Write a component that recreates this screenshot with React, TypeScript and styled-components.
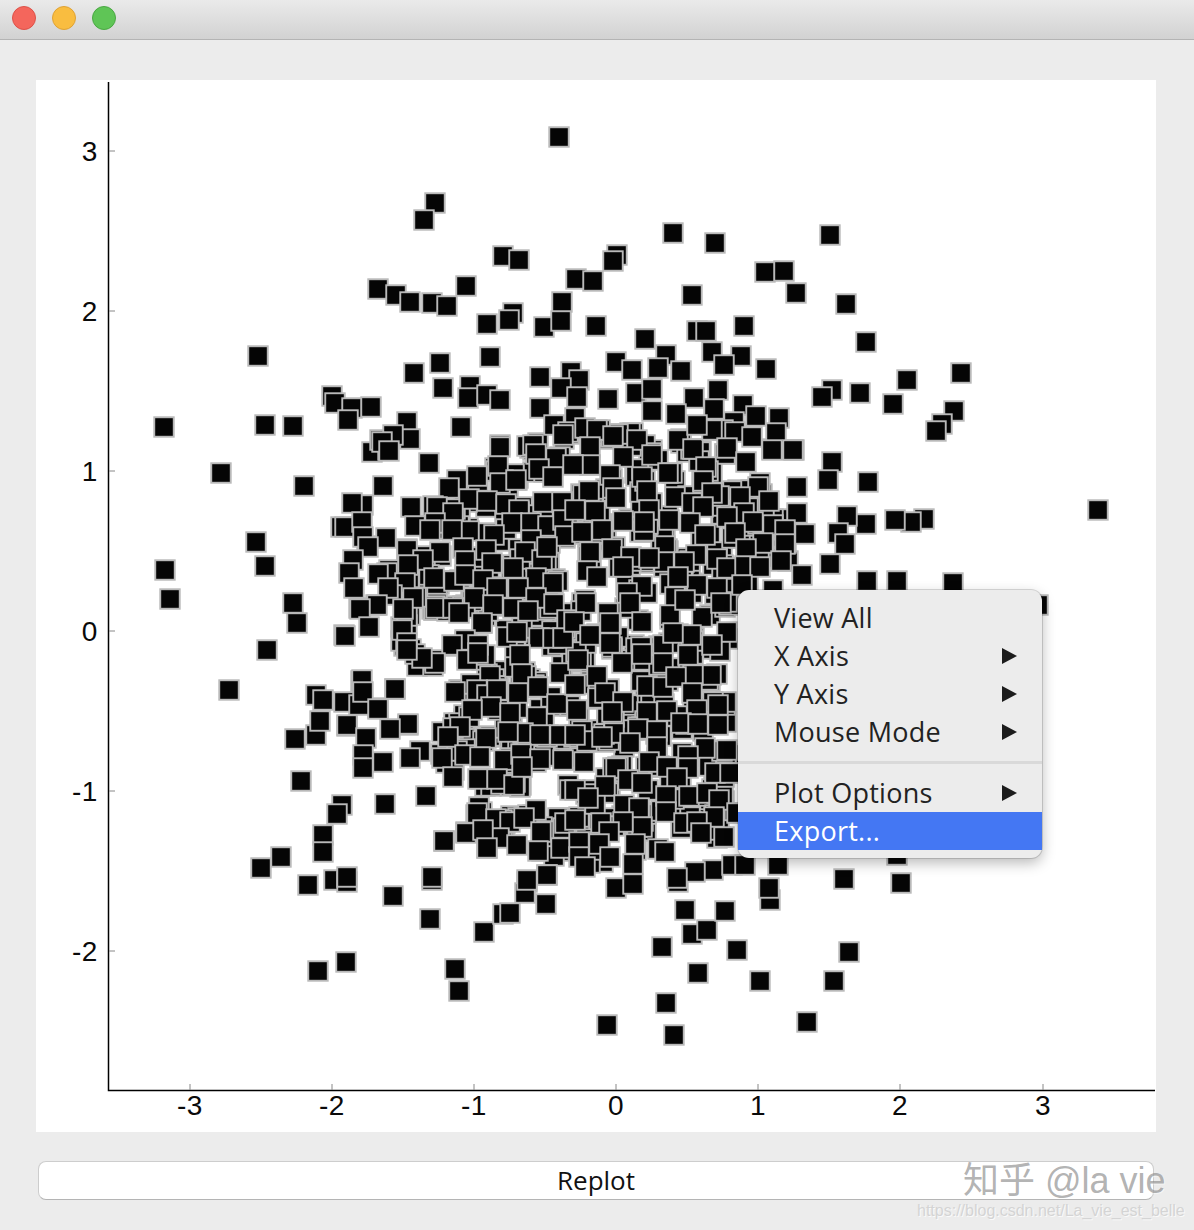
import React from "react";
import styled, { createGlobalStyle } from "styled-components";

const Global = createGlobalStyle`
  html, body { margin: 0; padding: 0; background: #ececec; }
  body { font-family: "Liberation Sans", Arial, sans-serif; }
`;

const Win = styled.div`
  position: relative;
  width: 1194px;
  height: 1230px;
  overflow: hidden;
  background: #ececec;
  display: flex;
  flex-direction: column;
`;
const TitleBar = styled.div`
  box-sizing: border-box;
  height: 40px;
  flex: none;
  display: flex;
  align-items: flex-start;
  gap: 16px;
  padding: 6px 0 0 12px;
  background: linear-gradient(#eaeaea, #d2d2d2);
  border-bottom: 1px solid #b4b4b4;
`;
const Light = styled.span<{ $fill: string; $edge: string }>`
  box-sizing: border-box;
  width: 24px;
  height: 24px;
  border-radius: 50%;
  background: ${(p) => p.$fill};
  border: 1px solid ${(p) => p.$edge};
`;
const Body = styled.div`
  flex: 1;
  display: flex;
  flex-direction: column;
  padding: 40px 38px 30px 36px;
`;
const PlotPanel = styled.div`
  position: relative;
  width: 1120px;
  height: 1052px;
  background: #fff;
`;
const PlotSvg = styled.svg`
  display: block;
  width: 1120px;
  height: 1052px;
`;
const AxisLabel = styled.text`
  font-family: "Liberation Sans", Arial, sans-serif;
  font-size: 28px;
  letter-spacing: 0.6px;
  fill: #0a0a0a;
`;
const Menu = styled.div`
  position: absolute;
  left: 702px;
  top: 510px;
  box-sizing: border-box;
  width: 304px;
  height: 268px;
  padding: 9px 0 8px;
  background: #ececec;
  border-radius: 11px;
  box-shadow: 0 0 0 1px rgba(0, 0, 0, 0.14), 0 5px 14px rgba(0, 0, 0, 0.28);
  font-family: "Open Sans", "Noto Sans", sans-serif;
`;
const MenuRow = styled.div<{ $active?: boolean }>`
  box-sizing: border-box;
  height: 38px;
  padding: 0 25px 0 36px;
  display: flex;
  align-items: center;
  justify-content: space-between;
  font-size: 27px;
  line-height: 36px;
  letter-spacing: 0.25px;
  color: ${(p) => (p.$active ? "#fff" : "#222")};
  background: ${(p) => (p.$active ? "#4477f3" : "transparent")};
`;
const MenuLabel = styled.span`
  margin-top: -1px;
`;
const Arrow = styled.span`
  width: 0;
  height: 0;
  border-left: 15px solid #1c1c1c;
  border-top: 8px solid transparent;
  border-bottom: 8px solid transparent;
`;
const Separator = styled.div`
  height: 3px;
  margin: 10px 0;
  background: #d9d9d9;
`;
const ReplotButton = styled.button`
  box-sizing: border-box;
  margin: 29px 0 0 2px;
  width: 1116px;
  height: 39px;
  flex: none;
  background: #fff;
  border: 1px solid #cdcdcd;
  border-bottom-color: #b4b4b4;
  border-radius: 8px;
  font-family: "Open Sans", "Noto Sans", sans-serif;
  font-size: 26px;
  line-height: 34px;
  color: #111;
  padding: 0 0 2px;
`;
const ZhihuMark = styled.div`
  position: absolute;
  left: 963px;
  top: 1160px;
  font-family: "Liberation Sans", "Noto Sans CJK SC", sans-serif;
  font-size: 36px;
  line-height: 42px;
  white-space: nowrap;
  color: rgba(130, 130, 130, 0.62);
  text-shadow: 1px 1px 0 rgba(255, 255, 255, 0.5);
`;
const CsdnMark = styled.div`
  position: absolute;
  left: 917px;
  top: 1201px;
  font-family: "Liberation Sans", sans-serif;
  font-size: 16px;
  line-height: 20px;
  white-space: nowrap;
  color: #d4d4d4;
  text-shadow: 1px 1px 0 #fafafa;
`;

const outer: [number, number][] = [
  [559,137],[435,203],[424,220],[673,233],[715,243],[830,235],[503,256],[519,260],[617,255],[613,261],[576,279],[593,281],[765,272],[784,271],[796,293],[378,289],[396,295],[410,302],[432,303],[447,306],[466,286],[562,302],[513,313],[692,295],[846,304],[487,324],[509,320],[544,327],[561,321],[596,326],[697,331],[706,331],[744,326],[645,339],[866,342],[258,356],[440,363],[490,357],[414,373],[666,355],[712,352],[741,356],[724,365],[766,369],[961,373],[907,380],[332,396],[335,403],[352,408],[371,407],[407,422],[443,388],[470,386],[468,398],[487,395],[500,400],[540,377],[540,408],[608,399],[616,362],[632,370],[658,368],[681,371],[718,390],[694,398],[860,393],[893,404],[832,390],[822,397],[954,411],[942,424],[936,431],[164,427],[265,425],[293,426],[348,420],[461,427],[221,473],[429,463],[304,486],[383,486],[372,452],[388,450],[380,440],[832,462],[868,482],[828,480],[794,450],[772,449],[779,418],[1098,510],[924,519],[911,522],[895,520],[866,524],[847,516],[838,533],[845,544],[805,534],[256,542],[265,566],[165,570],[170,599],[341,527],[363,505],[352,503],[293,603],[297,623],[267,650],[229,690],[344,635],[361,681],[395,689],[316,695],[323,700],[295,739],[316,735],[320,721],[347,726],[378,708],[408,725],[301,781],[342,805],[337,814],[385,804],[426,796],[323,835],[323,852],[281,857],[261,868],[308,885],[334,880],[347,882],[393,896],[432,880],[430,919],[484,932],[503,914],[510,913],[527,882],[525,893],[546,904],[547,875],[455,969],[459,991],[346,962],[318,971],[607,1025],[666,1003],[674,1035],[698,973],[662,947],[692,934],[707,930],[725,911],[685,910],[678,882],[737,950],[760,981],[807,1022],[834,981],[849,952],[770,900],[769,888],[844,879],[901,883],[778,865],[616,888],[633,884],[466,832],[444,841],[487,848],[867,581],[897,581],[953,583],[830,564],[1038,605],[802,575],[897,855],
  [571,372],[579,380],[561,388],[577,397],[636,393],[652,389],[652,411],[676,414],[714,409],[743,405],[756,416],[734,422],[723,430],[575,418],[611,437],[600,430],[527,446],[500,445],[554,425],[568,432],[585,428],[376,605],[359,608],[389,570],[407,549],[367,546]
];

const dense: [number, number][] = [
  [410,439],[393,435],[382,442],[389,451],[500,447],[533,445],[536,454],[556,458],[563,435],[498,466],[477,476],[457,480],[539,469],[553,477],[500,483],[516,480],[449,488],[469,499],[487,501],[543,502],[562,502],[411,507],[433,506],[437,507],[506,504],[519,510],[453,513],[435,523],[512,523],[531,523],[548,526],[563,520],[469,531],[494,535],[531,540],[345,527],[362,522],[415,526],[430,530],[452,530],[565,536],[363,537],[386,538],[368,547],[407,550],[440,552],[423,560],[463,548],[486,550],[525,552],[542,560],[547,547],[465,561],[353,560],[408,565],[492,563],[513,568],[536,578],[553,583],[349,573],[387,573],[378,574],[454,581],[434,578],[465,575],[483,580],[354,588],[405,583],[497,588],[518,588],[474,598],[536,598],[413,598],[392,595],[388,588],[493,605],[554,604],[377,605],[360,609],[403,609],[436,608],[453,608],[459,613],[513,608],[528,611],[482,623],[507,637],[517,632],[539,638],[553,638],[567,620],[369,627],[402,630],[345,636],[407,643],[465,640],[452,645],[478,645],[563,638],
  [597,430],[613,436],[637,440],[652,455],[623,457],[678,440],[693,449],[712,430],[697,425],[735,432],[752,437],[776,433],[727,448],[746,462],[772,450],[793,450],[706,467],[590,447],[590,465],[573,465],[610,475],[668,473],[642,477],[703,481],[758,487],[797,487],[589,491],[613,488],[647,491],[712,493],[675,497],[692,503],[740,497],[769,501],[616,498],[703,507],[595,511],[744,513],[575,510],[649,510],[623,521],[644,531],[644,522],[669,520],[690,523],[773,525],[727,517],[797,513],[753,522],[705,535],[602,530],[582,532],[735,533],[785,530],[763,543],[612,549],[665,546],[590,552],[746,549],[785,544],[631,557],[696,555],[684,562],[717,559],[781,561],[727,568],[664,562],[649,558],[587,571],[623,567],[597,577],[745,566],[760,567],[697,585],[742,585],[717,588],[642,586],[678,577],[675,597],[773,590],[586,603],[627,593],[630,603],[608,613],[642,622],[670,615],[702,617],[721,603],[685,600],[574,622],[727,632],[590,635],[610,623],[610,643],[691,635],[663,645],[641,647],[712,645],[673,633],
  [435,663],[422,658],[407,650],[467,660],[478,653],[520,655],[362,680],[395,689],[490,676],[455,692],[522,674],[560,673],[477,690],[487,695],[497,690],[538,687],[518,693],[557,704],[491,707],[472,710],[510,713],[537,717],[344,702],[359,705],[363,692],[378,709],[408,724],[390,729],[347,725],[460,727],[448,737],[523,733],[486,738],[508,732],[540,735],[560,735],[366,738],[420,751],[363,755],[383,762],[442,758],[465,755],[410,758],[480,757],[504,760],[521,754],[540,759],[563,760],[363,768],[453,777],[478,779],[497,779],[514,785],[522,767],[570,790],[477,813],[496,819],[536,810],[510,822],[524,818],[541,832],[466,833],[444,841],[499,838],[483,830],[517,845],[487,848],[538,851],[561,848],[565,823],[547,875],[527,880],[432,877],[347,877],
  [578,660],[622,663],[597,676],[575,685],[663,663],[642,654],[688,655],[711,675],[693,675],[647,686],[605,693],[663,687],[676,677],[692,693],[718,705],[623,702],[612,712],[577,710],[667,711],[697,710],[647,712],[681,723],[638,729],[718,725],[657,731],[698,724],[587,741],[614,733],[602,737],[657,747],[705,748],[630,743],[688,756],[727,750],[575,735],[584,762],[649,762],[667,767],[616,768],[688,768],[715,773],[730,773],[628,780],[605,786],[575,790],[642,783],[677,778],[666,796],[689,796],[707,793],[719,800],[588,798],[624,805],[639,808],[666,812],[575,820],[601,823],[684,823],[714,817],[697,822],[737,813],[642,827],[623,822],[609,832],[724,837],[701,833],[579,842],[599,844],[610,857],[635,844],[579,857],[633,864],[585,867],[665,852],[713,870],[695,872],[732,865],[745,865],[677,878]
];

function makeUnderLayer(): [number, number][] {
  let seed = 8123;
  const rnd = () => {
    seed = (seed * 1664525 + 1013904223) >>> 0;
    return seed / 4294967296;
  };
  const res: [number, number][] = [];
  for (let i = 0; i < 20000 && res.length < 620; i++) {
    const x = 350 + rnd() * 450;
    const y = 430 + rnd() * 440;
    const dx = (x - 615) / 215;
    const dy = (y - 645) / 225;
    const near = dense.some(([qx, qy]) => Math.abs(qx - x) <= 8 && Math.abs(qy - y) <= 8);
    const centre = dx * dx + dy * dy < 1 && x > 395;
    if (near && centre) res.push([Math.round(x), Math.round(y)]);
  }
  return res;
}

const points = [...makeUnderLayer(), ...outer, ...dense];
const xTicks: [number, string][] = [[190,"-3"],[332,"-2"],[474,"-1"],[616,"0"],[758,"1"],[900,"2"],[1043,"3"]];
const yTicks: [number, string][] = [[151,"3"],[311,"2"],[471,"1"],[631,"0"],[791,"-1"],[951,"-2"]];

export default function App() {
  return (
    <Win>
      <Global />
      <TitleBar>
        <Light $fill="#f4665c" $edge="#dd5148" />
        <Light $fill="#f9bd40" $edge="#dfa235" />
        <Light $fill="#5fc556" $edge="#4aa843" />
      </TitleBar>
      <Body>
        <PlotPanel>
          <PlotSvg viewBox="36 80 1120 1052">
            {points.map(([x, y], i) => (
              <rect key={i} x={x - 9.75} y={y - 9.75} width={19.5} height={19.5} fill="#050505" stroke="#b9b9b9" strokeWidth={1.9} />
            ))}
            <path d="M108.5 82V1090.5H1155" fill="none" stroke="#000" strokeWidth={1.5} />
            {xTicks.map(([x, t]) => (
              <g key={t}>
                <line x1={x} x2={x} y1={1084} y2={1090} stroke="#888" strokeWidth={1} />
                <AxisLabel x={x} y={1115} textAnchor="middle">{t}</AxisLabel>
              </g>
            ))}
            {yTicks.map(([y, t]) => (
              <g key={t}>
                <line x1={109} x2={115} y1={y} y2={y} stroke="#888" strokeWidth={1} />
                <AxisLabel x={98} y={y + 9.5} textAnchor="end">{t}</AxisLabel>
              </g>
            ))}
          </PlotSvg>
          <Menu>
            <MenuRow><MenuLabel>View All</MenuLabel></MenuRow>
            <MenuRow><MenuLabel>X Axis</MenuLabel><Arrow /></MenuRow>
            <MenuRow><MenuLabel>Y Axis</MenuLabel><Arrow /></MenuRow>
            <MenuRow><MenuLabel>Mouse Mode</MenuLabel><Arrow /></MenuRow>
            <Separator />
            <MenuRow><MenuLabel>Plot Options</MenuLabel><Arrow /></MenuRow>
            <MenuRow $active><MenuLabel>Export...</MenuLabel></MenuRow>
          </Menu>
        </PlotPanel>
        <ReplotButton>Replot</ReplotButton>
      </Body>
      <ZhihuMark>知乎 @la vie</ZhihuMark>
      <CsdnMark>https://blog.csdn.net/La_vie_est_belle</CsdnMark>
    </Win>
  );
}
